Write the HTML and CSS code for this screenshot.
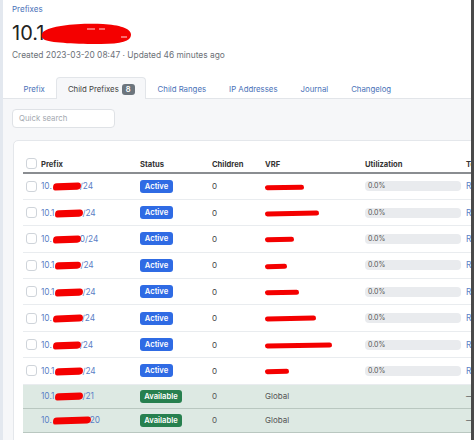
FILE: index.html
```html
<!DOCTYPE html>
<html>
<head>
<meta charset="utf-8">
<link rel="stylesheet" href="styles.css">
</head>
<body>
<div class="page">
  <main class="main">
    <header class="head">
      <div class="crumb"><a href="#">Prefixes</a></div>
      <h1 class="title">10.1<svg class="title-redact" width="92" height="22" viewBox="0 0 92 22"><path d="M2 9 C10 2 40 0 62 1 C78 2 90 5 90 12 C90 18 80 21 60 21 C36 21 12 20 4 17 C0 15 0 12 2 9 Z" fill="#f40000"/><path d="M46 6 L54 6 M58 6 L64 6 M80 14 L86 14" stroke="#ffd6d6" stroke-width="1"/></svg></h1>
      <div class="meta">Created 2023-03-20 08:47 · Updated 46 minutes ago</div>
      <nav class="tabs">
        <a class="tab" href="#">Prefix</a>
        <a class="tab active" href="#">Child Prefixes <span class="count">8</span></a>
        <a class="tab" href="#">Child Ranges</a>
        <a class="tab" href="#">IP Addresses</a>
        <a class="tab" href="#">Journal</a>
        <a class="tab" href="#">Changelog</a>
      </nav>
    </header>
    <section class="content">
      <div class="search">Quick search</div>
      <div class="card">
        <table class="grid">
          <colgroup>
            <col class="c-cb"><col class="c-prefix"><col class="c-status"><col class="c-children"><col class="c-vrf"><col class="c-util"><col class="c-tenant">
          </colgroup>
          <thead>
            <tr><th><span class="cb"></span></th><th>Prefix</th><th>Status</th><th>Children</th><th>VRF</th><th>Utilization</th><th>Tenant</th></tr>
          </thead>
          <tbody>
            <tr><td><span class="cb"></span></td><td><a href="#">10.<span class="rx" style="width:28px"></span>/24</a></td><td><span class="badge active-b">Active</span></td><td>0</td><td><span class="rv" style="width:39px"></span></td><td><div class="bar"><span>0.0%</span></div></td><td><a href="#">R</a></td></tr>
            <tr><td><span class="cb"></span></td><td><a href="#">10.1<span class="rx" style="width:28px"></span>/24</a></td><td><span class="badge active-b">Active</span></td><td>0</td><td><span class="rv" style="width:54px"></span></td><td><div class="bar"><span>0.0%</span></div></td><td><a href="#">R</a></td></tr>
            <tr><td><span class="cb"></span></td><td><a href="#">10.<span class="rx" style="width:28px"></span>0/24</a></td><td><span class="badge active-b">Active</span></td><td>0</td><td><span class="rv" style="width:29px"></span></td><td><div class="bar"><span>0.0%</span></div></td><td><a href="#">R</a></td></tr>
            <tr><td><span class="cb"></span></td><td><a href="#">10.1<span class="rx" style="width:26px"></span>/24</a></td><td><span class="badge active-b">Active</span></td><td>0</td><td><span class="rv" style="width:22px"></span></td><td><div class="bar"><span>0.0%</span></div></td><td><a href="#">R</a></td></tr>
            <tr><td><span class="cb"></span></td><td><a href="#">10.1<span class="rx" style="width:28px"></span>/24</a></td><td><span class="badge active-b">Active</span></td><td>0</td><td><span class="rv" style="width:34px"></span></td><td><div class="bar"><span>0.0%</span></div></td><td><a href="#">R</a></td></tr>
            <tr><td><span class="cb"></span></td><td><a href="#">10.<span class="rx" style="width:30px"></span>/24</a></td><td><span class="badge active-b">Active</span></td><td>0</td><td><span class="rv" style="width:51px"></span></td><td><div class="bar"><span>0.0%</span></div></td><td><a href="#">R</a></td></tr>
            <tr><td><span class="cb"></span></td><td><a href="#">10.<span class="rx" style="width:28px"></span>/24</a></td><td><span class="badge active-b">Active</span></td><td>0</td><td><span class="rv" style="width:67px"></span></td><td><div class="bar"><span>0.0%</span></div></td><td><a href="#">R</a></td></tr>
            <tr><td><span class="cb"></span></td><td><a href="#">10.1<span class="rx" style="width:28px"></span>/24</a></td><td><span class="badge active-b">Active</span></td><td>0</td><td><span class="rv" style="width:24px"></span></td><td><div class="bar"><span>0.0%</span></div></td><td><a href="#">R</a></td></tr>
            <tr class="avail"><td></td><td><a href="#">10.1<span class="rx" style="width:28px"></span>/21</a></td><td><span class="badge avail-b">Available</span></td><td>0</td><td>Global</td><td></td><td>—</td></tr>
            <tr class="avail"><td></td><td><a href="#">10.<span class="rx" style="width:38px"></span>20</a></td><td><span class="badge avail-b">Available</span></td><td>0</td><td>Global</td><td></td><td>—</td></tr>
          </tbody>
        </table>
      </div>
    </section>
  </main>
  <div class="edge"></div>
</div>
</body>
</html>
```
FILE: styles.css
```css
* { box-sizing: border-box; }
html, body { margin: 0; padding: 0; }
body {
  font-family: Inter, "Noto Sans", sans-serif;
  color: #333;
  background: #fff;
}
a { color: #4a72b8; text-decoration: none; }
.page {
  display: flex;
  width: 474px;
  height: 440px;
  overflow: hidden;
  border-left: 3px solid #e3e8ef;
}
.main {
  flex: 1;
  min-width: 0;
  display: flex;
  flex-direction: column;
  overflow: hidden;
}
.edge {
  width: 3px;
  flex: none;
  background: #4a4a4a;
}
.head {
  background: #fff;
  padding: 0 0 0 9px;
  border-bottom: 1px solid #e2e5e9;
}
.crumb {
  padding-top: 2px;
  font-size: 8px;
  line-height: 14px;
}
.title {
  margin: 3px 0 0;
  font-size: 20px;
  font-weight: 400;
  line-height: 28px;
  color: #222;
  display: flex;
  align-items: center;
}
.title-redact { margin-left: -3px; margin-top: 1px; }
.meta {
  margin-top: 1px;
  font-size: 8.4px;
  line-height: 14px;
  color: #6c7178;
}
.tabs {
  display: flex;
  margin-top: 15px;
  height: 22px;
  margin-bottom: -1px;
}
.tab {
  display: flex;
  align-items: center;
  padding: 0 10.5px;
  font-size: 7.8px;
  color: #4a72b8;
  border: 1px solid transparent;
  border-bottom: none;
}
.tab.active {
  color: #444;
  background: #f6f7f9;
  border-color: #e2e5e9;
  border-radius: 4px 4px 0 0;
  height: 23px;
}
.count {
  display: inline-block;
  margin-left: 3px;
  background: #6c757d;
  color: #fff;
  font-size: 7.5px;
  font-weight: 600;
  line-height: 11px;
  padding: 0 4px;
  border-radius: 3px;
}
.content {
  flex: 1;
  background: #f6f7f9;
  padding: 10px 0 0 9px;
}
.search {
  width: 103px;
  height: 19px;
  background: #fff;
  border: 1px solid #dfe2e6;
  border-radius: 4px;
  font-size: 7.8px;
  line-height: 17px;
  color: #a4a9b0;
  padding-left: 6px;
}
.card {
  margin-top: 12px;
  margin-left: 1px;
  width: 560px;
  height: 320px;
  background: #fff;
  border: 1px solid #e4e7eb;
  border-radius: 5px 0 0 0;
  padding: 15px 0 0 9px;
}
.grid {
  border-collapse: collapse;
  table-layout: fixed;
  width: 540px;
  font-size: 8px;
}
.c-cb { width: 15px; }
.c-prefix { width: 99px; }
.c-status { width: 72px; }
.c-children { width: 53px; }
.c-vrf { width: 100px; }
.c-util { width: 101px; }
.c-tenant { width: 100px; }
.grid th {
  text-align: left;
  font-weight: 700;
  font-size: 7.6px;
  color: #333;
  height: 17px;
  padding: 1px 0 0 3px;
  border-bottom: 2px solid #8a8d91;
  vertical-align: middle;
}
.grid td {
  height: 26.4px;
  padding: 0 0 0 3px;
  border-bottom: 1px solid #e9ecef;
  color: #444;
  vertical-align: middle;
  white-space: nowrap;
}
.grid td a { color: #5a80c6; font-size: 8.3px; }
.cb {
  display: block;
  width: 11px;
  height: 11px;
  border: 1px solid #cfd4da;
  border-radius: 3px;
  background: #fff;
}
.grid th .cb { margin-top: -3px; }
.rx {
  display: inline-block;
  height: 7px;
  background: #f40000;
  border-radius: 4px 3px 4px 2px;
  vertical-align: -1px;
  margin: 0 -1px 0 1px;
  transform: rotate(-2deg);
}
.rv {
  display: inline-block;
  height: 5px;
  background: #f40000;
  border-radius: 3px;
  vertical-align: middle;
  transform: rotate(-1deg);
}
.badge {
  display: inline-block;
  color: #fff;
  font-weight: 600;
  font-size: 7.6px;
  line-height: 13px;
  height: 13px;
  padding: 0 4px;
  border-radius: 3px;
}
.active-b { background: #2f6be4; width: 33px; text-align: center; padding: 0; }
.avail-b { background: #27804f; width: 42px; text-align: center; padding: 0; }
.bar {
  width: 96px;
  height: 10px;
  background: #e9ebee;
  border-radius: 4px;
  font-size: 7px;
  line-height: 10px;
  color: #555;
  padding-left: 3px;
}
.grid tr.avail td {
  background: #dde9e3;
  height: 24px;
  border-bottom: 1px solid #b9c7c0;
  color: #555;
}
```
